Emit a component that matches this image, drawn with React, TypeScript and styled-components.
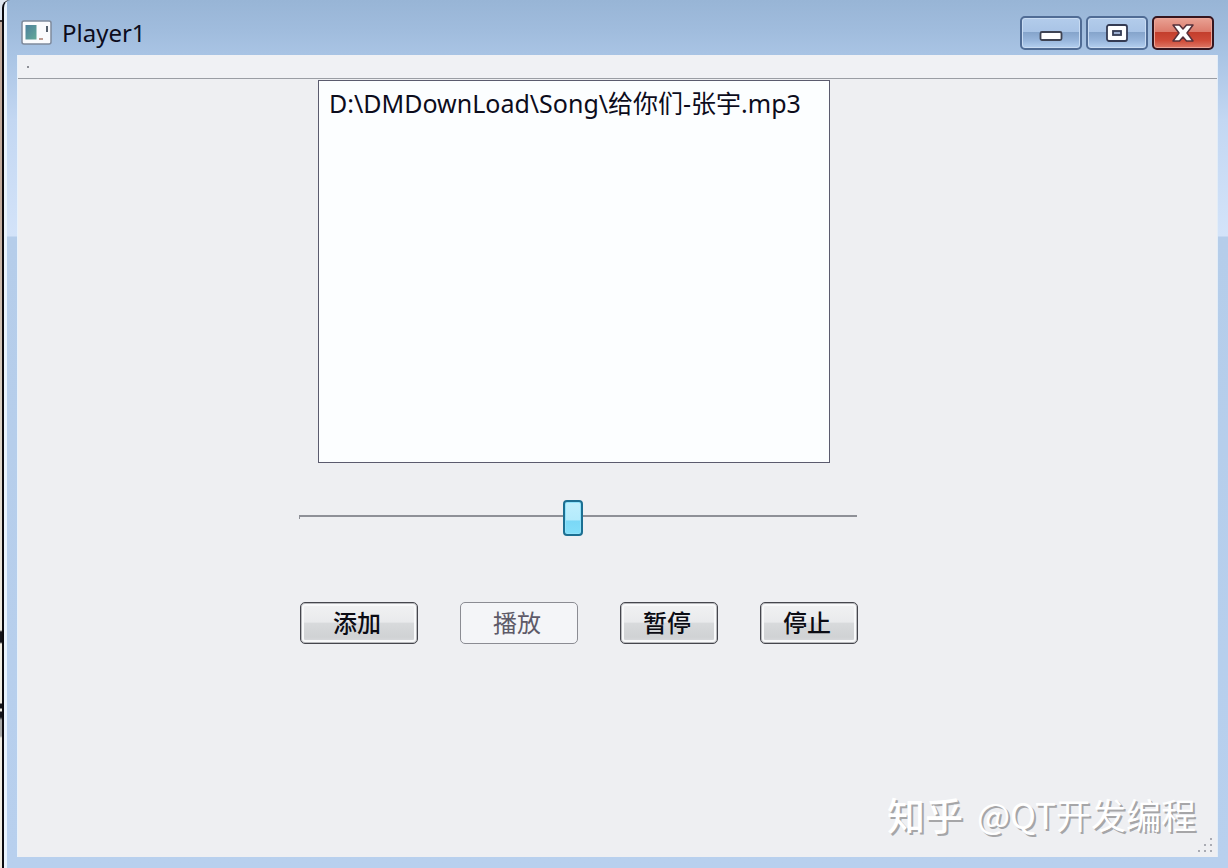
import React, { useState } from "react";
import styled, { createGlobalStyle } from "styled-components";

const GlobalStyle = createGlobalStyle`
  *, *::before, *::after { box-sizing: border-box; }
  body {
    margin: 0;
    font-family: "Noto Sans", "Noto Sans CJK SC", sans-serif;
    color: #0c0c1c;
  }
`;

const Desktop = styled.div`
  display: flex;
  min-height: 100vh;
  padding-left: 2px;
  background: linear-gradient(
    #dfe6ef 0 20px, #3a3230 20px 22px, #c2ab9c 22px 200px, #d9cfc2 400px, #f1ede2 630px,
    #14141a 632px 642px, #f1ede2 644px 703px, #14141a 704px 708px, #f1ede2 709px 711px,
    #14141a 712px 717px, #a9a9a6 720px 736px, #f1ede2 738px
  );
`;

const Window = styled.div`
  flex: 1;
  display: flex;
  flex-direction: column;
  padding: 0 10px 11px 13px;
  border-left: 2px solid #0b0b10;
  border-top-left-radius: 8px;
  background:
    linear-gradient(to right, #eaf4fd 0 3px, transparent 3px),
    linear-gradient(#98b5d6 0, #a0bcdd 30px, #a9c4e4 55px, #c3d7f2 120px, #d3e3f9 236px, #b5cdea 237px, #b8d0ee 100%);
`;

const TitleBar = styled.header`
  display: flex;
  align-items: center;
  height: 55px;
  padding: 10px 4px 0;
`;

const Title = styled.h1`
  flex: 1;
  margin: 0 0 0 9px;
  font-size: 24px;
  line-height: 32px;
  font-weight: 400;
`;

const Controls = styled.div`
  display: flex;
  gap: 4px;
`;

const ControlButton = styled.button<{ $close?: boolean }>`
  display: grid;
  place-items: center;
  width: 62px;
  height: 34px;
  padding: 0;
  border: 2px solid ${(p) => (p.$close ? "#35161f" : "#506c95")};
  border-radius: 5px;
  box-shadow: inset 0 0 0 1px ${(p) => (p.$close ? "#eda598" : "#c9dcf3")};
  background: ${(p) =>
    p.$close
      ? "linear-gradient(#e9a294 0, #dc7c6d 45%, #c23d2c 46%, #cf4b38 75%, #dd7766 100%)"
      : "linear-gradient(#b3cceb 0, #a9c4e6 45%, #84a3ca 46%, #98b6dc 75%, #b4d0f0 100%)"};
`;

const Client = styled.main`
  position: relative;
  flex: 1;
  display: flex;
  flex-direction: column;
  border-left: 1px solid #e8f2fb;
  border-right: 1px solid #e3edf7;
  background: #eeeff2;
`;

const ToolBar = styled.div`
  height: 24px;
  padding: 11px 9px;
  border-bottom: 1px solid #9a9da3;
  background: #f0f1f4;
`;

const ToolHandle = styled.div`
  width: 2px;
  height: 2px;
  background: #8d8f96;
`;

const Player = styled.section`
  width: 558px;
  margin-left: 281px;
  padding: 1px 0 120px;
`;

const PlayList = styled.ul`
  width: 512px;
  height: 383px;
  margin: 0 0 0 19px;
  padding: 6px 10px;
  border: 1px solid #5b5b6e;
  background: #fcfeff;
  list-style: none;
`;

const Track = styled.li`
  font-size: 25px;
  line-height: 32px;
  white-space: nowrap;
`;

const Slider = styled.input`
  display: block;
  appearance: none;
  width: 100%;
  height: 36px;
  margin: 36px 0 67px;
  background: transparent;

  &::-webkit-slider-runnable-track {
    height: 4px;
    border-top: 2px solid #8e9097;
    border-left: 1px solid #8e9097;
  }
  &::-webkit-slider-thumb {
    appearance: none;
    width: 20px;
    height: 36px;
    margin-top: -17px;
    border: 2px solid #1c6f92;
    border-radius: 4px;
    box-shadow: inset 0 0 0 1px #8fe2fb;
    background: linear-gradient(#c0effd 0, #b4ebfc 55%, #7bd8f6 60%, #82def9 100%);
  }
`;

const ButtonRow = styled.div`
  display: flex;
  gap: 42px;
  padding-left: 1px;
`;

const PushButton = styled.button<{ $wide?: boolean }>`
  flex: none;
  width: ${(p) => (p.$wide ? 118 : 98)}px;
  height: 42px;
  padding: 0 4px 2px 0;
  border: 1px solid #45464d;
  border-radius: 5px;
  box-shadow: inset 0 0 0 1px #b9babd, inset 0 0 0 3px #f8f9fa;
  background: linear-gradient(#f1f2f3 0, #e9eaec 48%, #d8dadc 50%, #d0d2d4 85%, #dcdde0 100%);
  color: #0c0c14;
  font: 500 24px/36px "Noto Sans CJK SC", sans-serif;

  &:disabled {
    border-color: #8b8c93;
    box-shadow: none;
    background: #f4f5f8;
    color: #5e5a68;
    font-weight: 400;
  }
`;

const Watermark = styled.div`
  position: absolute;
  right: 21px;
  bottom: 17px;
  display: flex;
  gap: 14px;
  color: #ffffff;
  font: 400 35px/52px "Noto Sans CJK SC", sans-serif;
  text-shadow: 2px 2px 0 #a6a6a8;
  white-space: nowrap;
`;

const Brand = styled.span`
  font-size: 38px;
  font-weight: 500;
`;

const SizeGrip = styled.svg`
  position: absolute;
  right: 4px;
  bottom: 4px;
`;

const AppIcon = () => (
  <svg width="32" height="26" viewBox="0 0 32 26" aria-hidden="true">
    <rect x="1" y="1" width="29" height="23" rx="2" fill="#fafbfd" stroke="#7f8a9c" strokeWidth="1.5" />
    <defs>
      <linearGradient id="screen" x1="0" y1="0" x2="1" y2="1">
        <stop offset="0" stopColor="#4c7f9c" />
        <stop offset="1" stopColor="#63aa98" />
      </linearGradient>
    </defs>
    <rect x="4.5" y="5" width="11" height="14.5" fill="url(#screen)" />
    <rect x="25" y="6" width="2" height="6" fill="#55606d" />
    <rect x="18" y="18" width="4" height="2" fill="#bd9c92" />
  </svg>
);

const MinimizeIcon = () => (
  <svg width="24" height="20" viewBox="0 0 24 20" aria-hidden="true">
    <rect x="1.5" y="9" width="21" height="8" rx="1.5" fill="#fff" stroke="#3e4353" strokeWidth="1.8" />
  </svg>
);

const MaximizeIcon = () => (
  <svg width="24" height="20" viewBox="0 0 24 20" aria-hidden="true">
    <rect x="2" y="2" width="20" height="16" rx="2" fill="#fff" stroke="#343b53" strokeWidth="1.8" />
    <rect x="8" y="8" width="8" height="4" fill="#9dafd0" stroke="#343b53" strokeWidth="1.8" />
  </svg>
);

const CloseIcon = () => (
  <svg width="24" height="20" viewBox="0 0 24 20" aria-hidden="true">
    <path
      d="M2 2h6.500l3.500 4 3.500-4H22l-6 8 6 8h-6.500l-3.500-4-3.500 4H2l6-8z"
      fill="#fff"
      stroke="#56303a"
      strokeWidth="1.500"
      strokeLinejoin="round"
    />
  </svg>
);

export default function App() {
  const [position, setPosition] = useState(49);

  return (
    <>
      <GlobalStyle />
      <Desktop>
        <Window>
          <TitleBar>
            <AppIcon />
            <Title>Player1</Title>
            <Controls>
              <ControlButton type="button" aria-label="Minimize">
                <MinimizeIcon />
              </ControlButton>
              <ControlButton type="button" aria-label="Maximize">
                <MaximizeIcon />
              </ControlButton>
              <ControlButton type="button" aria-label="Close" $close>
                <CloseIcon />
              </ControlButton>
            </Controls>
          </TitleBar>
          <Client>
            <ToolBar>
              <ToolHandle />
            </ToolBar>
            <Player>
              <PlayList>
                <Track>D:\DMDownLoad\Song\给你们-张宇.mp3</Track>
              </PlayList>
              <Slider
                type="range"
                min={0}
                max={100}
                value={position}
                onChange={(e) => setPosition(Number(e.target.value))}
                aria-label="Position"
              />
              <ButtonRow>
                <PushButton type="button" $wide>添加</PushButton>
                <PushButton type="button" $wide disabled>播放</PushButton>
                <PushButton type="button">暂停</PushButton>
                <PushButton type="button">停止</PushButton>
              </ButtonRow>
            </Player>
            <Watermark>
              <Brand>知乎</Brand>
              <span>@QT开发编程</span>
            </Watermark>
            <SizeGrip width="16" height="16" viewBox="0 0 16 16" aria-hidden="true">
              <g fill="#a9abb3">
                <rect x="13" y="1" width="2" height="2" />
                <rect x="7" y="7" width="2" height="2" />
                <rect x="13" y="7" width="2" height="2" />
                <rect x="1" y="13" width="2" height="2" />
                <rect x="7" y="13" width="2" height="2" />
                <rect x="13" y="13" width="2" height="2" />
              </g>
            </SizeGrip>
          </Client>
        </Window>
      </Desktop>
    </>
  );
}
